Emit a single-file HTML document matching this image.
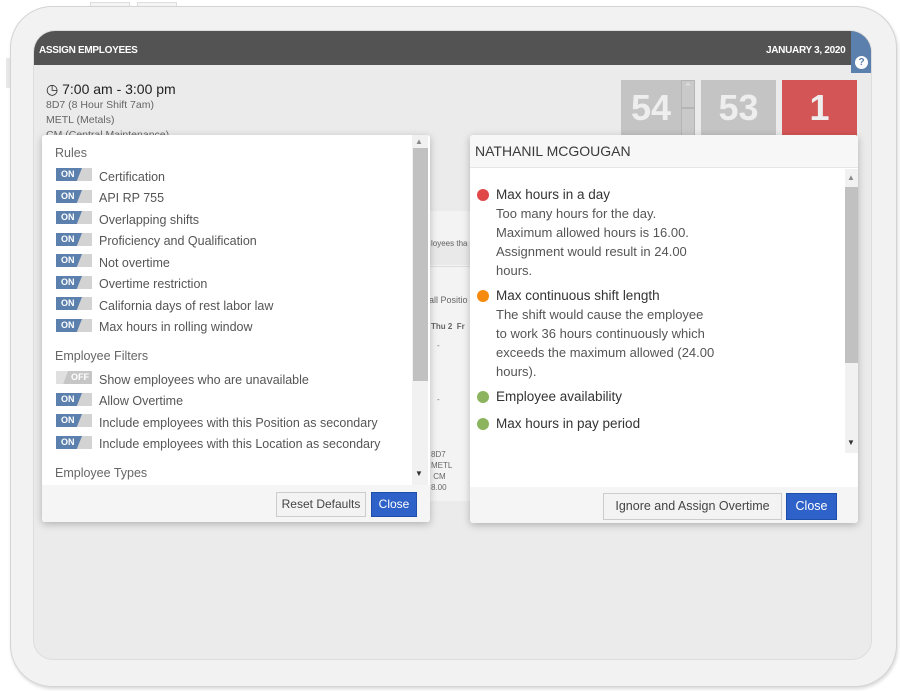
<!DOCTYPE html>
<html><head><style>
*{box-sizing:border-box;margin:0;padding:0}
body{width:900px;height:691px;background:#fff;font-family:"Liberation Sans",sans-serif;position:relative;overflow:hidden}
.abs{position:absolute}
.frame{left:10px;top:6px;width:887px;height:681px;border-radius:42px;background:#f2f2f2;border:1px solid #d4d4d4;box-shadow:1px 2px 3px rgba(0,0,0,.15)}
.screen{left:33px;top:30px;width:839px;height:630px;background:#ebebeb;border-radius:22px 22px 20px 20px;border:1px solid #ddd;overflow:hidden}
.hdr{left:0;top:0;width:839px;height:34px;background:#535353;color:#fff;font-size:10px;font-weight:bold;letter-spacing:-.3px}
.tab{left:817px;top:0;width:22px;height:42px;background:#5b80ad;border-radius:0 22px 0 0}
.tile{color:#eee;font-weight:bold;font-size:36px;text-align:center;line-height:56px}
.panel{background:#fff;box-shadow:0 2px 8px rgba(0,0,0,.25);border-radius:3px;overflow:hidden}
.tg{position:absolute;left:14px;width:36px;height:13px;background:#d3d3d3}
.tg .on{position:absolute;left:0;top:0;width:26px;height:13px;background:#5b80ad;clip-path:polygon(0 0,100% 0,80% 100%,0 100%);color:#fff;font-size:9px;font-weight:bold;line-height:13px;padding-left:5px}
.tg.off{background:#c6c6c6}
.tg.off .on{display:none}
.tg.off span{position:absolute;right:3px;top:0;color:#fff;font-size:9px;font-weight:bold;line-height:13px}
.tg.off:before{content:"";position:absolute;left:0;top:0;width:12px;height:13px;background:#e0e0e0;clip-path:polygon(0 0,100% 0,60% 100%,0 100%)}
.lbl{position:absolute;left:57px;font-size:12.5px;color:#555;line-height:15px}
.sec{position:absolute;left:13px;font-size:12.5px;color:#666}
.btn{position:absolute;font-size:12px;text-align:center;border:1px solid #ccc;background:#f3f3f3;color:#444}
.blue{background:#2e62c9;border:1px solid #1f4ea8;color:#fff}
.it{position:absolute;left:26px;font-size:13.5px;color:#333;line-height:19px}
.dsc{position:absolute;left:26px;font-size:13px;color:#555;line-height:19px}
.dot{position:absolute;left:7px;width:12px;height:12px;border-radius:50%}
.bg{font-size:8px;color:#666}
</style></head><body>
<div class="abs" style="left:90px;top:2px;width:40px;height:4px;border:1px solid #ddd;border-bottom:none;background:#f5f5f5"></div>
<div class="abs" style="left:137px;top:2px;width:40px;height:4px;border:1px solid #ddd;border-bottom:none;background:#f5f5f5"></div>
<div class="abs" style="left:6px;top:58px;width:4px;height:30px;background:#e8e8e8"></div>
<div class="abs frame"></div>
<div class="abs screen">
 <div class="abs hdr"><span class="abs" style="left:5px;top:14px">ASSIGN EMPLOYEES</span><span class="abs" style="left:732px;top:14px">JANUARY 3, 2020</span></div>
 <div class="abs tab"><div class="abs" style="left:4px;top:25px;width:13px;height:13px;border-radius:50%;background:#fff;color:#5b80ad;font-size:10px;font-weight:bold;text-align:center;line-height:13px">?</div></div>
 <div class="abs" style="left:12px;top:50px;font-size:14px;color:#222">&#9719; 7:00 am - 3:00 pm</div>
 <div class="abs" style="left:12px;top:67px;font-size:10.5px;color:#666;line-height:15px">8D7 (8 Hour Shift 7am)<br>METL (Metals)<br>CM (Central Maintenance)</div>
 <div class="abs tile" style="left:587px;top:49px;width:60px;height:56px;background:#c4c4c4">54</div>
 <div class="abs" style="left:647px;top:49px;width:14px;height:28px;background:#c9c9c9;border:1px solid #b5b5b5;color:#eee;font-size:9px;text-align:center">^</div>
 <div class="abs" style="left:647px;top:77px;width:14px;height:28px;background:#c9c9c9;border:1px solid #b5b5b5"></div>
 <div class="abs tile" style="left:667px;top:49px;width:75px;height:56px;background:#c4c4c4">53</div>
 <div class="abs tile" style="left:748px;top:49px;width:75px;height:56px;background:#d45555">1</div>
 <div class="abs" style="left:380px;top:180px;width:90px;height:290px;background:#f3f3f3"></div>
 <div class="abs" style="left:380px;top:210px;width:70px;height:24px;background:#e9e9e9"></div>
 <div class="abs bg" style="left:397px;top:208px">loyees tha</div>
 <div class="abs bg" style="left:390px;top:235px;width:60px;border-top:1px solid #ddd"></div>
 <div class="abs bg" style="left:395px;top:264px;font-size:9px">all Positio</div>
 <div class="abs bg" style="left:397px;top:291px;font-weight:bold">Thu 2 &nbsp;Fr</div>
 <div class="abs bg" style="left:403px;top:310px">-</div>
 <div class="abs bg" style="left:403px;top:364px">-</div>
 <div class="abs bg" style="left:397px;top:418px;line-height:11px">8D7<br>METL<br>&nbsp;CM<br>8.00</div>
</div>

<div class="abs panel" style="left:42px;top:135px;width:388px;height:387px">
 <div class="abs" style="left:370px;top:0;width:16px;height:350px;background:#f1f1f1"></div>
 <div class="abs" style="left:371px;top:13px;width:15px;height:233px;background:#c1c1c1"></div>
 <div class="abs" style="left:373px;top:2px;font-size:8px;color:#888">&#9650;</div>
 <div class="abs" style="left:373px;top:334px;font-size:8px;color:#333">&#9660;</div>
 <div class="sec" style="top:11px">Rules</div>
 <div class="tg" style="top:33px"><div class="on">ON</div></div><div class="lbl" style="top:35px">Certification</div>
 <div class="tg" style="top:55px"><div class="on">ON</div></div><div class="lbl" style="top:56px">API RP 755</div>
 <div class="tg" style="top:76px"><div class="on">ON</div></div><div class="lbl" style="top:78px">Overlapping shifts</div>
 <div class="tg" style="top:98px"><div class="on">ON</div></div><div class="lbl" style="top:99px">Proficiency and Qualification</div>
 <div class="tg" style="top:119px"><div class="on">ON</div></div><div class="lbl" style="top:121px">Not overtime</div>
 <div class="tg" style="top:141px"><div class="on">ON</div></div><div class="lbl" style="top:142px">Overtime restriction</div>
 <div class="tg" style="top:162px"><div class="on">ON</div></div><div class="lbl" style="top:164px">California days of rest labor law</div>
 <div class="tg" style="top:184px"><div class="on">ON</div></div><div class="lbl" style="top:185px">Max hours in rolling window</div>
 <div class="sec" style="top:214px">Employee Filters</div>
 <div class="tg off" style="top:236px"><span>OFF</span></div><div class="lbl" style="top:238px">Show employees who are unavailable</div>
 <div class="tg" style="top:258px"><div class="on">ON</div></div><div class="lbl" style="top:259px">Allow Overtime</div>
 <div class="tg" style="top:279px"><div class="on">ON</div></div><div class="lbl" style="top:281px">Include employees with this Position as secondary</div>
 <div class="tg" style="top:301px"><div class="on">ON</div></div><div class="lbl" style="top:302px">Include employees with this Location as secondary</div>
 <div class="sec" style="top:331px">Employee Types</div>
 <div class="abs" style="left:0;top:350px;width:388px;height:37px;background:#f5f5f5"></div>
 <div class="btn" style="left:234px;top:357px;width:90px;height:25px;line-height:23px">Reset Defaults</div>
 <div class="btn blue" style="left:329px;top:357px;width:46px;height:25px;line-height:23px">Close</div>
</div>

<div class="abs panel" style="left:470px;top:135px;width:388px;height:388px">
 <div class="abs" style="left:0;top:0;width:388px;height:33px;background:#f7f7f7;border-bottom:1px solid #e5e5e5"></div>
 <div class="abs" style="left:5px;top:8px;font-size:14px;color:#3a3a3a">NATHANIL MCGOUGAN</div>
 <div class="abs" style="left:375px;top:34px;width:13px;height:284px;background:#f1f1f1"></div>
 <div class="abs" style="left:375px;top:52px;width:13px;height:176px;background:#c1c1c1"></div>
 <div class="abs" style="left:377px;top:38px;font-size:8px;color:#888">&#9650;</div>
 <div class="abs" style="left:377px;top:303px;font-size:8px;color:#333">&#9660;</div>
 <div class="dot" style="top:54px;background:#e04848"></div><div class="it" style="top:50px">Max hours in a day</div>
 <div class="dsc" style="top:69px">Too many hours for the day.<br>Maximum allowed hours is 16.00.<br>Assignment would result in 24.00<br>hours.</div>
 <div class="dot" style="top:155px;background:#f68a0e"></div><div class="it" style="top:151px">Max continuous shift length</div>
 <div class="dsc" style="top:170px">The shift would cause the employee<br>to work 36 hours continuously which<br>exceeds the maximum allowed (24.00<br>hours).</div>
 <div class="dot" style="top:256px;background:#8cb45e"></div><div class="it" style="top:252px">Employee availability</div>
 <div class="dot" style="top:283px;background:#8cb45e"></div><div class="it" style="top:279px">Max hours in pay period</div>
 <div class="abs" style="left:0;top:352px;width:388px;height:36px;background:#f5f5f5"></div>
 <div class="btn" style="left:133px;top:358px;width:179px;height:27px;line-height:25px;font-size:12.5px">Ignore and Assign Overtime</div>
 <div class="btn blue" style="left:316px;top:358px;width:51px;height:27px;line-height:25px;font-size:12.5px">Close</div>
</div>
</body></html>
